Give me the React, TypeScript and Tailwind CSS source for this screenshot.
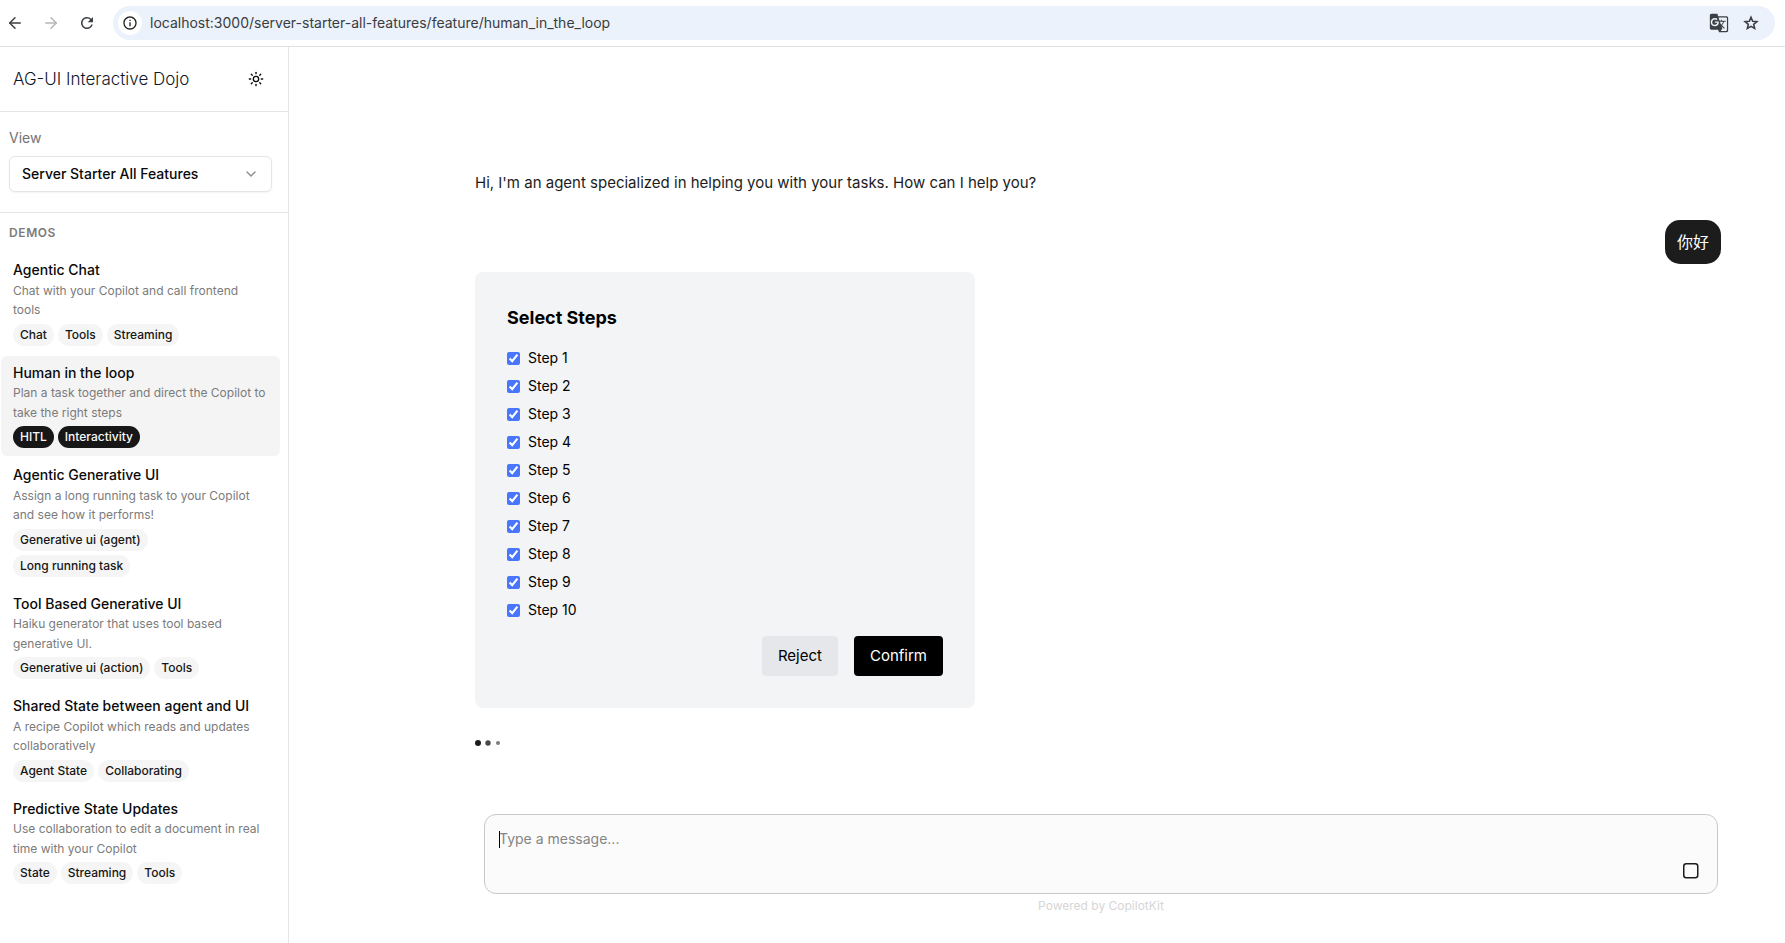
import { useState } from "react";
import { ArrowLeft, ArrowRight, ChevronDown, Sun } from "lucide-react";
import { MdGTranslate, MdInfoOutline, MdRefresh } from "react-icons/md";

type Demo = { title: string; description: string; tags: string[] };

const demos: Demo[] = [
  {
    title: "Agentic Chat",
    description: "Chat with your Copilot and call frontend tools",
    tags: ["Chat", "Tools", "Streaming"],
  },
  {
    title: "Human in the loop",
    description: "Plan a task together and direct the Copilot to take the right steps",
    tags: ["HITL", "Interactivity"],
  },
  {
    title: "Agentic Generative UI",
    description: "Assign a long running task to your Copilot and see how it performs!",
    tags: ["Generative ui (agent)", "Long running task"],
  },
  {
    title: "Tool Based Generative UI",
    description: "Haiku generator that uses tool based generative UI.",
    tags: ["Generative ui (action)", "Tools"],
  },
  {
    title: "Shared State between agent and UI",
    description: "A recipe Copilot which reads and updates collaboratively",
    tags: ["Agent State", "Collaborating"],
  },
  {
    title: "Predictive State Updates",
    description: "Use collaboration to edit a document in real time with your Copilot",
    tags: ["State", "Streaming", "Tools"],
  },
];

function StarIcon() {
  return (
    <svg width="18" height="18" viewBox="0 0 24 24" fill="none" stroke="currentColor" strokeWidth="2.1">
      <path d="M12 4.4l2.2 5.2 5.7.5-4.3 3.7 1.3 5.5-4.9-2.9-4.9 2.9 1.3-5.5-4.3-3.7 5.7-.5z" />
    </svg>
  );
}

function BrowserBar() {
  return (
    <header className="flex items-center border-b border-[#dfe1e3] bg-white py-1.5 pr-[10px] pl-1.5">
      <div className="flex items-center gap-[18px] text-[#3c3f43]">
        <button type="button" aria-label="Back">
          <ArrowLeft size={18} strokeWidth={2} />
        </button>
        <button type="button" aria-label="Forward" className="text-[#b4b6b8]">
          <ArrowRight size={18} strokeWidth={2} />
        </button>
        <button type="button" aria-label="Reload">
          <MdRefresh size={18} />
        </button>
      </div>
      <div className="ml-[17px] flex h-[34px] min-w-0 flex-1 items-center rounded-full bg-[#ebf2fb] pr-[15px] pl-[5px] text-[#3c3f43]">
        <button
          type="button"
          aria-label="Site information"
          className="flex size-6 shrink-0 items-center justify-center rounded-full bg-white text-[#202124]"
        >
          <MdInfoOutline size={16} />
        </button>
        <input
          aria-label="Address"
          className="ml-2 min-w-0 flex-1 bg-transparent text-sm text-[#3a3c3f] outline-none"
          defaultValue="localhost:3000/server-starter-all-features/feature/human_in_the_loop"
        />
        <button type="button" aria-label="Translate this page" className="mr-[13px]">
          <MdGTranslate size={20} />
        </button>
        <button type="button" aria-label="Bookmark this tab">
          <StarIcon />
        </button>
      </div>
    </header>
  );
}

function DemoItem({ demo, active, onSelect }: { demo: Demo; active: boolean; onSelect: () => void }) {
  return (
    <li>
      <button
        type="button"
        onClick={onSelect}
        aria-current={active}
        className={
          active
            ? "block w-full rounded-md bg-[#f4f4f4] px-3 py-2 text-left"
            : "block w-full rounded-md px-3 py-2 text-left"
        }
      >
        <span className="block text-sm leading-tight font-medium text-neutral-950">{demo.title}</span>
        <span className="mt-0.5 block text-xs leading-relaxed text-[#7b7b7b]">{demo.description}</span>
        <span className="mt-1 flex flex-wrap gap-1">
          {demo.tags.map((tag) => (
            <span
              key={tag}
              className={
                active
                  ? "rounded-full bg-neutral-900 px-[7px] py-[3px] text-xs font-medium text-neutral-50"
                  : "rounded-full bg-neutral-100 px-[7px] py-[3px] text-xs font-medium text-neutral-900"
              }
            >
              {tag}
            </span>
          ))}
        </span>
      </button>
    </li>
  );
}

function Sidebar() {
  const [selected, setSelected] = useState(1);
  return (
    <aside className="w-[289px] shrink-0 border-r border-neutral-200 bg-white">
      <div className="flex h-[65px] items-center justify-between border-b border-neutral-200 pr-6 pl-[13px]">
        <h1 className="text-[17px] leading-7 font-light text-slate-900">AG-UI Interactive Dojo</h1>
        <button type="button" aria-label="Toggle theme" className="text-neutral-950">
          <Sun size={16} />
        </button>
      </div>
      <div className="border-b border-neutral-200 pt-4 pr-4 pb-5 pl-[9px]">
        <label htmlFor="view" className="block text-sm text-[#737373]">
          View
        </label>
        <div className="relative mt-2">
          <select
            id="view"
            className="h-9 w-full appearance-none rounded-md border border-neutral-200 bg-white px-3 text-sm font-medium text-neutral-950 shadow-xs"
          >
            <option>Server Starter All Features</option>
          </select>
          <ChevronDown
            size={16}
            className="pointer-events-none absolute top-[10px] right-[13px] text-[#8a8a8a]"
          />
        </div>
      </div>
      <nav className="pt-3 pr-2 pl-px" aria-label="Demos">
        <h2 className="pl-2 text-xs font-semibold tracking-wider text-[#7b7b7b]">DEMOS</h2>
        <ul className="mt-3 flex flex-col gap-0.5">
          {demos.map((demo, i) => (
            <DemoItem key={demo.title} demo={demo} active={i === selected} onSelect={() => setSelected(i)} />
          ))}
        </ul>
      </nav>
    </aside>
  );
}

function StepPicker() {
  const [checked, setChecked] = useState<boolean[]>(Array(10).fill(true));
  return (
    <section className="mt-2 max-w-[500px] rounded-lg bg-gray-100 p-8">
      <h2 className="text-lg font-bold text-black">Select Steps</h2>
      <ul className="mt-4 flex flex-col gap-2">
        {checked.map((on, i) => (
          <li key={i} className="flex">
            <label className="flex items-center gap-2 text-sm text-black">
              <input
                type="checkbox"
                className="size-[13px] accent-[#4a76fd]"
                checked={on}
                onChange={() => setChecked(checked.map((c, j) => (j === i ? !c : c)))}
              />
              Step {i + 1}
            </label>
          </li>
        ))}
      </ul>
      <div className="mt-4 flex justify-end gap-4">
        <button type="button" className="rounded bg-gray-200 px-4 py-2 text-[15px] leading-6 text-black">
          Reject
        </button>
        <button type="button" className="rounded bg-black px-4 py-2 text-[15px] leading-6 text-white">
          Confirm
        </button>
      </div>
    </section>
  );
}

function Composer() {
  return (
    <div className="mt-[68px] pr-[3px] pl-[9px]">
      <div className="relative flex h-20 rounded-xl border border-[#c8c8c8] bg-[#fbfbfb]">
        <textarea
          aria-label="Message"
          placeholder="Type a message..."
          className="flex-1 resize-none bg-transparent px-[14px] py-[14px] text-sm text-neutral-900 outline-none placeholder:text-[#858585]"
        />
        <span className="absolute top-4 left-[14px] h-[17px] w-px bg-black" />
        <button type="button" aria-label="Stop" className="mr-4 mb-3 self-end">
          <svg width="20" height="20" viewBox="0 0 20 20" fill="none" stroke="#1c1c1c" strokeWidth="1.5">
            <rect x="2.75" y="2.75" width="14" height="14" rx="2.5" />
          </svg>
        </button>
      </div>
      <p className="mt-1 text-center text-xs text-[#d6d6d6]">Powered by CopilotKit</p>
    </div>
  );
}

export default function App() {
  return (
    <div className="flex min-h-screen flex-col bg-white font-['Inter','Noto_Sans_CJK_SC',sans-serif]">
      <BrowserBar />
      <div className="flex flex-1">
        <Sidebar />
        <main className="min-w-0 flex-1 pt-[124px] pr-16 pl-[186px]">
          <p className="text-[15px] leading-6 text-[#1c1c1c]">
            Hi, I'm an agent specialized in helping you with your tasks. How can I help you?
          </p>
          <div className="mt-[25px] flex justify-end">
            <p className="rounded-[15px] bg-[#1c1c1c] px-3 py-[10px] text-base text-white">你好</p>
          </div>
          <StepPicker />
          <div className="mt-8 flex h-[6px] items-center" role="status" aria-label="Working">
            <svg width="26" height="6" viewBox="0 0 26 6">
              <circle cx="3" cy="3" r="3" fill="#1c1c1c" />
              <circle cx="13" cy="3" r="2.7" fill="#484848" />
              <circle cx="23" cy="3" r="2" fill="#7d7d7d" />
            </svg>
          </div>
          <Composer />
        </main>
      </div>
    </div>
  );
}
